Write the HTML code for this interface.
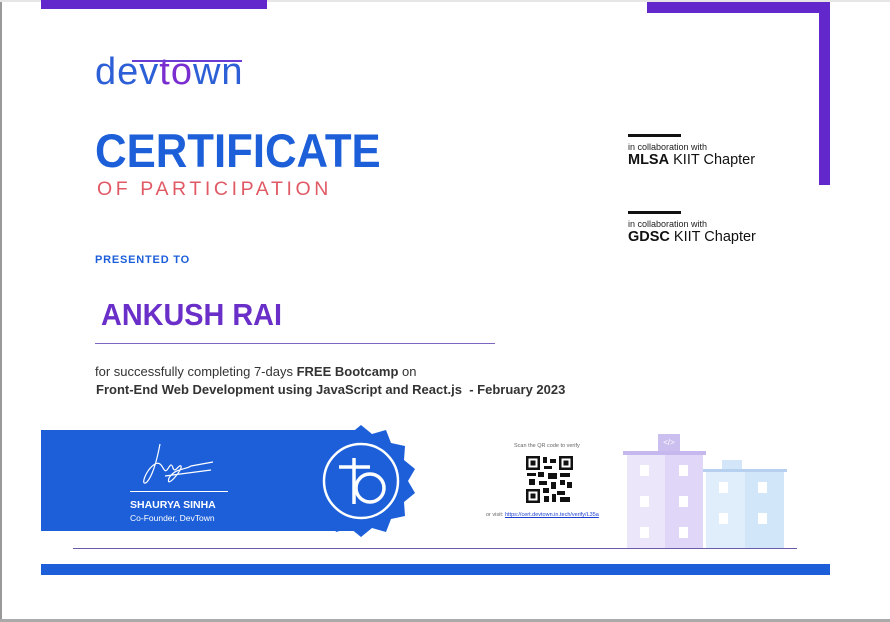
<!DOCTYPE html>
<html><head><meta charset="utf-8"><style>
*{margin:0;padding:0;box-sizing:border-box}
body{width:890px;height:622px;background:#fff;position:relative;overflow:hidden;font-family:"Liberation Sans",sans-serif}
.a{position:absolute}
</style></head><body>
<div class="a" style="left:0;top:0;width:2px;height:622px;background:#999"></div>
<div class="a" style="left:0;top:619px;width:890px;height:3px;background:#aaa"></div>
<div class="a" style="left:0;top:0;width:890px;height:2px;background:#e6e6e6"></div>
<div class="a" style="left:41px;top:0;width:226px;height:9px;background:#6228cc"></div>
<div class="a" style="left:647px;top:2px;width:183px;height:11px;background:#6228cc"></div>
<div class="a" style="left:819px;top:2px;width:11px;height:183px;background:#6228cc"></div>

<div class="a" style="left:95px;top:52px;font-size:38px;letter-spacing:1px;color:#2d5fd6;line-height:40px">dev<span style="color:#7a2ed0">to</span>wn</div>
<div class="a" style="left:132px;top:60px;width:110px;height:2px;background:#6a3cd4"></div>

<div class="a" style="left:95px;top:126px;font-size:47px;font-weight:bold;color:#1c5fd9;line-height:50px;transform:scaleX(0.93);transform-origin:0 0">CERTIFICATE</div>
<div class="a" style="left:97px;top:178px;font-size:19.5px;color:#e05a66;letter-spacing:3.6px;line-height:22px">OF PARTICIPATION</div>

<div class="a" style="left:628px;top:134px;width:53px;height:3px;background:#111"></div>
<div class="a" style="left:628px;top:142px;font-size:9px;color:#222">in collaboration with</div>
<div class="a" style="left:628px;top:152px;font-size:14.5px;color:#111"><b>MLSA</b> KIIT Chapter</div>
<div class="a" style="left:628px;top:211px;width:53px;height:3px;background:#111"></div>
<div class="a" style="left:628px;top:219px;font-size:9px;color:#222">in collaboration with</div>
<div class="a" style="left:628px;top:229px;font-size:14.5px;color:#111"><b>GDSC</b> KIIT Chapter</div>

<div class="a" style="left:95px;top:254px;font-size:11px;font-weight:bold;color:#1c5fd9;letter-spacing:0.8px">PRESENTED TO</div>
<div class="a" style="left:101px;top:297px;font-size:31px;font-weight:bold;color:#6a2fc8;line-height:36px;transform:scaleX(0.93);transform-origin:0 0">ANKUSH RAI</div>
<div class="a" style="left:95px;top:343px;width:400px;height:1px;background:#7b66c4"></div>
<div class="a" style="left:95px;top:364px;font-size:13px;color:#333">for successfully completing 7-days <b>FREE Bootcamp</b> on</div>
<div class="a" style="left:96px;top:382px;font-size:13px;color:#333;font-weight:bold">Front-End Web Development using JavaScript and React.js &nbsp;- February 2023</div>

<div class="a" style="left:41px;top:430px;width:320px;height:101px;background:#1c5fd9"></div>
<svg class="a" style="left:300px;top:422px" width="122" height="118" viewBox="0 0 122 118">
<polygon fill="#1c5fd9" points="61,3 72,12 86,8 91,21 105,24 104,38 115,47 108,59 115,71 104,80 105,94 91,97 86,110 72,106 61,115 50,106 36,110 31,97 17,94 18,80 7,71 14,59 7,47 18,38 17,24 31,21 36,8 50,12"/>
<circle cx="61" cy="59" r="37" fill="none" stroke="#fff" stroke-width="2.5"/>
<line x1="39" y1="45" x2="70" y2="45" stroke="#fff" stroke-width="3.5"/>
<line x1="54" y1="36" x2="54" y2="82" stroke="#fff" stroke-width="3.5"/>
<circle cx="70" cy="66" r="14" fill="none" stroke="#fff" stroke-width="3.5"/>
</svg>
<svg class="a" style="left:135px;top:440px" width="80" height="50"><path d="M25 4 C22 20 18 35 12 42 C5 48 10 30 20 24 C28 20 28 34 32 30 C35 26 36 22 38 28 C40 34 44 24 46 26 C48 30 30 50 34 38 C40 28 50 30 56 26 L78 22 M30 36 L76 30" fill="none" stroke="#fff" stroke-width="1.2"/></svg>
<div class="a" style="left:130px;top:491px;width:98px;height:1px;background:#fff"></div>
<div class="a" style="left:130px;top:499px;font-size:10.5px;font-weight:bold;color:#fff">SHAURYA SINHA</div>
<div class="a" style="left:130px;top:513px;font-size:8.5px;color:#fff">Co-Founder, DevTown</div>

<div class="a" style="left:514px;top:443px;font-size:5.5px;color:#666">Scan the QR code to verify</div>
<svg class="a" style="left:526px;top:456px" width="47" height="47" viewBox="0 0 47 47">
<rect x="0" y="0" width="14" height="14" fill="#111"/><rect x="2.5" y="2.5" width="9" height="9" fill="#fff"/><rect x="4.5" y="4.5" width="5" height="5" fill="#111"/>
<rect x="33" y="0" width="14" height="14" fill="#111"/><rect x="35.5" y="2.5" width="9" height="9" fill="#fff"/><rect x="37.5" y="4.5" width="5" height="5" fill="#111"/>
<rect x="0" y="33" width="14" height="14" fill="#111"/><rect x="2.5" y="35.5" width="9" height="9" fill="#fff"/><rect x="4.5" y="37.5" width="5" height="5" fill="#111"/>
<g fill="#111"><rect x="17" y="1" width="4" height="6"/><rect x="24" y="3" width="6" height="4"/><rect x="18" y="10" width="8" height="3"/><rect x="1" y="17" width="9" height="3"/><rect x="12" y="16" width="6" height="5"/><rect x="22" y="17" width="9" height="6"/><rect x="34" y="17" width="10" height="4"/><rect x="3" y="23" width="6" height="6"/><rect x="13" y="25" width="8" height="4"/><rect x="25" y="26" width="5" height="7"/><rect x="34" y="24" width="5" height="5"/><rect x="41" y="26" width="5" height="6"/><rect x="17" y="32" width="6" height="5"/><rect x="31" y="35" width="8" height="4"/><rect x="18" y="40" width="5" height="6"/><rect x="26" y="38" width="4" height="8"/><rect x="34" y="41" width="10" height="5"/></g>
</svg>
<div class="a" style="left:486px;top:512px;font-size:5.5px;color:#666">or visit: <span style="color:#1a3fd0;text-decoration:underline">https://cert.devtown.in.tech/verify/L35a</span></div>

<div class="a" style="left:658px;top:434px;width:22px;height:17px;background:#cbbff0;color:#fff;font-size:8px;text-align:center;line-height:17px">&lt;/&gt;</div>
<div class="a" style="left:623px;top:451px;width:83px;height:4px;background:#c6b8ee"></div>
<div class="a" style="left:627px;top:455px;width:76px;height:94px;background:linear-gradient(90deg,#ece6fb 50%,#e0d6f8 50%)"></div>
<div class="a" style="left:640px;top:465px;width:9px;height:11px;background:#fff"></div><div class="a" style="left:679px;top:465px;width:9px;height:11px;background:#fff"></div>
<div class="a" style="left:640px;top:496px;width:9px;height:11px;background:#fff"></div><div class="a" style="left:679px;top:496px;width:9px;height:11px;background:#fff"></div>
<div class="a" style="left:640px;top:527px;width:9px;height:11px;background:#fff"></div><div class="a" style="left:679px;top:527px;width:9px;height:11px;background:#fff"></div>
<div class="a" style="left:722px;top:460px;width:20px;height:9px;background:#d3e6f9"></div>
<div class="a" style="left:703px;top:469px;width:84px;height:3px;background:#b7d0ef"></div>
<div class="a" style="left:706px;top:472px;width:78px;height:77px;background:linear-gradient(90deg,#e0eefc 50%,#d2e6fa 50%)"></div>
<div class="a" style="left:719px;top:482px;width:9px;height:11px;background:#fff"></div><div class="a" style="left:758px;top:482px;width:9px;height:11px;background:#fff"></div>
<div class="a" style="left:719px;top:513px;width:9px;height:11px;background:#fff"></div><div class="a" style="left:758px;top:513px;width:9px;height:11px;background:#fff"></div>

<div class="a" style="left:73px;top:548px;width:724px;height:1px;background:#6a5aa8"></div>
<div class="a" style="left:41px;top:564px;width:789px;height:11px;background:#1c5fd9"></div>
</body></html>
